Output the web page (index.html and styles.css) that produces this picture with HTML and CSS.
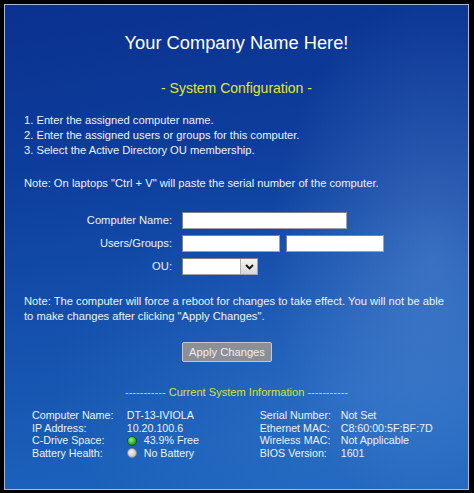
FILE: index.html
```html
<!DOCTYPE html>
<html>
<head>
<meta charset="utf-8">
<title>System Configuration</title>
<link rel="stylesheet" href="styles.css">
</head>
<body>
<div class="frame">
  <h1 class="title">Your Company Name Here!</h1>
  <h2 class="subtitle">- System Configuration -</h2>
  <div class="steps">
    <div>1. Enter the assigned computer name.</div>
    <div>2. Enter the assigned users or groups for this computer.</div>
    <div>3. Select the Active Directory OU membership.</div>
  </div>
  <p class="note note-top">Note: On laptops "Ctrl + V" will paste the serial number of the computer.</p>
  <div class="form">
    <label class="lbl">Computer Name:</label>
    <div class="fields"><span class="input w-long"></span></div>
    <label class="lbl">Users/Groups:</label>
    <div class="fields"><span class="input w-half"></span><span class="input w-half"></span></div>
    <label class="lbl">OU:</label>
    <div class="fields">
      <span class="select">
        <span class="select-field"></span>
        <span class="select-btn"><svg width="9" height="6" viewBox="0 0 9 6"><path d="M1 1 L4.5 4.5 L8 1" fill="none" stroke="#111" stroke-width="1.8"/></svg></span>
      </span>
    </div>
  </div>
  <p class="note note-bottom">Note: The computer will force a reboot for changes to take effect. You will not be able to make changes after clicking "Apply Changes".</p>
  <div class="btn-row"><button class="apply">Apply Changes</button></div>
  <div class="info-head">----------- Current System Information -----------</div>
  <div class="info">
    <span>Computer Name:</span><span>DT-13-IVIOLA</span><span>Serial Number:</span><span>Not Set</span>
    <span>IP Address:</span><span>10.20.100.6</span><span>Ethernet MAC:</span><span>C8:60:00:5F:BF:7D</span>
    <span>C-Drive Space:</span><span class="stat"><i class="dot green"></i>43.9% Free</span><span>Wireless MAC:</span><span>Not Applicable</span>
    <span>Battery Health:</span><span class="stat"><i class="dot gray"></i>No Battery</span><span>BIOS Version:</span><span>1601</span>
  </div>
</div>
</body>
</html>
```

FILE: styles.css
```css
html, body {
  margin: 0;
  padding: 0;
  background: #000;
}
body {
  width: 474px;
  height: 493px;
  overflow: hidden;
  font-family: "Liberation Sans", Arial, sans-serif;
  color: #eef2f9;
}
.frame {
  box-sizing: border-box;
  width: 465px;
  height: 486px;
  margin: 4px 0 0 4px;
  border: 1px solid #aab8d4;
  padding: 27px 0 0 19px;
  background:
    radial-gradient(ellipse 160px 260px at 92% 52%, rgba(180,215,255,0.22), rgba(180,215,255,0) 100%),
    radial-gradient(ellipse 300px 200px at 75% 80%, rgba(90,150,225,0.25), rgba(90,150,225,0) 100%),
    linear-gradient(172deg, #0a318f 0%, #0d3d9c 30%, #1450ad 60%, #1a5fb9 85%, #1c63bc 100%);
}
.title {
  margin: 0 19px 0 0;
  font-size: 18.3px;
  line-height: 22px;
  font-weight: normal;
  text-align: center;
  color: #ffffff;
}
.subtitle {
  margin: 26px 19px 0 0;
  font-size: 14px;
  line-height: 17px;
  font-weight: normal;
  text-align: center;
  color: #e4e81e;
}
.steps {
  margin-top: 16px;
  font-size: 11.2px;
  line-height: 15px;
}
.note {
  margin: 0;
  font-size: 11.2px;
  line-height: 15px;
}
.note-top {
  margin-top: 18px;
}
.form {
  display: grid;
  grid-template-columns: 148px auto;
  column-gap: 10px;
  row-gap: 6px;
  margin-top: 21px;
  font-size: 11.2px;
}
.lbl {
  text-align: right;
  line-height: 17px;
  height: 17px;
}
.fields {
  display: flex;
  gap: 6px;
  height: 17px;
}
.input {
  box-sizing: border-box;
  display: block;
  height: 17px;
  background: #fff;
  border: 1px solid #9ca3ad;
  border-top-color: #7b8089;
  border-left-color: #7b8089;
}
.w-long { width: 165px; }
.w-half { width: 98px; }
.select {
  box-sizing: border-box;
  display: flex;
  width: 76px;
  height: 17px;
  background: #fff;
  border: 1px solid #9ca3ad;
  border-top-color: #7b8089;
  border-left-color: #7b8089;
}
.select-field {
  flex: 1;
}
.select-btn {
  box-sizing: border-box;
  width: 17px;
  height: 15px;
  display: flex;
  align-items: center;
  justify-content: center;
  background: linear-gradient(#f4f4f4, #d8d8d8);
  border-left: 1px solid #b0b0b0;
}
.note-bottom {
  margin-top: 19px;
  padding-right: 17px;
}
.btn-row {
  margin-top: 18px;
  padding-left: 158px;
}
.apply {
  box-sizing: border-box;
  display: block;
  width: 90px;
  height: 20px;
  padding: 0;
  margin: 0;
  background: #8c8f95;
  border: 1px solid #c4c8d0;
  border-radius: 2px;
  color: #eeeeee;
  font-family: "Liberation Sans", Arial, sans-serif;
  font-size: 11.2px;
  line-height: 18px;
}
.info-head {
  margin: 24px 19px 0 0;
  font-size: 11.1px;
  line-height: 13px;
  text-align: center;
  color: #cfe43a;
}
.info {
  display: grid;
  grid-template-columns: 94.7px 133px 81px auto;
  margin: 10px 0 0 8px;
  font-size: 10.7px;
  line-height: 12.7px;
}
.stat {
  display: flex;
  align-items: center;
  gap: 7px;
}
.dot {
  display: block;
  box-sizing: border-box;
  width: 10px;
  height: 10px;
  border-radius: 50%;
}
.dot.green {
  background: radial-gradient(circle at 40% 35%, #8cf08c 0%, #2fb52f 55%, #137a13 100%);
  border: 1px solid #0e5e0e;
}
.dot.gray {
  background: radial-gradient(circle at 40% 35%, #f2f2f2 0%, #cfcfcf 60%, #a6a6a6 100%);
  border: 1px solid #8c8c8c;
}
```
